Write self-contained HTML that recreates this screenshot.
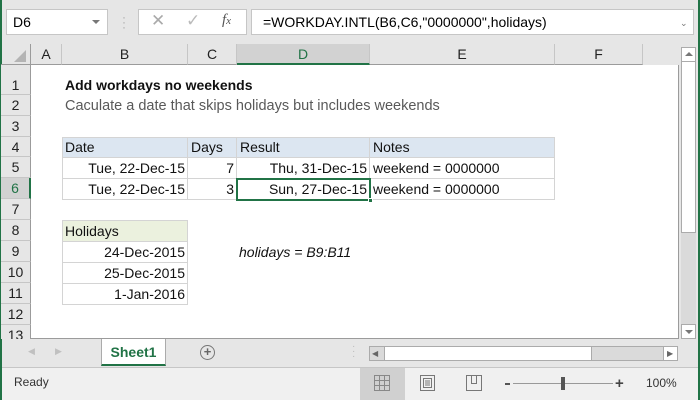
<!DOCTYPE html>
<html><head><meta charset="utf-8"><style>
*{margin:0;padding:0;box-sizing:border-box}
body{width:700px;height:400px;overflow:hidden;background:#e6e6e6;font-family:"Liberation Sans",Arial,sans-serif;position:relative;color:#000}
.a{position:absolute}
.rh{position:absolute;left:1px;width:30px;background:#e6e6e6;border-bottom:1px solid #c6c6c6;border-right:1px solid #9b9b9b;font-size:14px;text-align:center;color:#222}
.ch{position:absolute;top:44px;height:21px;border-right:1px solid #c6c6c6;font-size:14px;text-align:center;line-height:21px;color:#222;border-bottom:1px solid #9b9b9b}
.c{position:absolute;font-size:14px;white-space:nowrap;line-height:20px;padding:0 3px;color:#111}
.r{text-align:right}
</style></head><body>
<div class="a" style="left:0;top:0;width:2px;height:400px;background:#217346"></div>
<div class="a" style="right:0;top:0;width:2px;height:400px;background:#217346"></div>
<!-- formula bar -->
<div class="a" style="left:6px;top:9px;width:102px;height:26px;background:#fff;border:1px solid #c6c6c6;font-size:14px;line-height:24px;padding-left:6px">D6</div>
<div class="a" style="left:92px;top:20px;width:0;height:0;border-left:4px solid transparent;border-right:4px solid transparent;border-top:4px solid #777"></div>
<div class="a" style="left:122px;top:15px;color:#aaa;font-size:12px;line-height:5px">·<br>·<br>·</div>
<div class="a" style="left:138px;top:9px;width:109px;height:26px;background:#fff;border:1px solid #c6c6c6"></div>
<div class="a" style="left:151px;top:11px;font-size:17px;color:#aaa">✕</div>
<div class="a" style="left:186px;top:11px;font-size:17px;color:#bbb">✓</div>
<div class="a" style="left:222px;top:12px;font-size:15px;font-style:italic;font-family:'Liberation Serif',serif;color:#555">f<span style="font-size:11px">x</span></div>
<div class="a" style="left:251px;top:9px;width:443px;height:26px;background:#fff;border:1px solid #c6c6c6;font-size:14px;line-height:24px;padding-left:11px">=WORKDAY.INTL(B6,C6,"0000000",holidays)</div>
<div class="a" style="left:680px;top:18px;font-size:9px;color:#777">&#8964;</div>
<!-- column headers -->
<div class="a" style="left:1px;top:44px;width:30px;height:21px;border-right:1px solid #9b9b9b;border-bottom:1px solid #9b9b9b"></div>
<div class="a" style="left:14px;top:50px;width:0;height:0;border-left:12px solid transparent;border-bottom:12px solid #b4b4b4"></div>
<div class="ch" style="left:31px;width:31px">A</div>
<div class="ch" style="left:62px;width:126px">B</div>
<div class="ch" style="left:188px;width:49px">C</div>
<div class="ch" style="left:237px;width:133px;background:#d2d2d2;color:#217346;border-bottom:2px solid #217346">D</div>
<div class="ch" style="left:370px;width:185px">E</div>
<div class="ch" style="left:555px;width:88px">F</div>
<!-- grid area -->
<div class="a" style="left:31px;top:65px;width:648px;height:274px;background:#fff;border-right:1px solid #9b9b9b;border-bottom:1px solid #9b9b9b"></div>
<!-- row headers -->
<div class="rh" style="top:65px;height:30px;line-height:40px">1</div>
<div class="rh" style="top:95px;height:21px;line-height:21px">2</div>
<div class="rh" style="top:116px;height:21px;line-height:21px">3</div>
<div class="rh" style="top:137px;height:20px;line-height:20px">4</div>
<div class="rh" style="top:157px;height:21px;line-height:21px">5</div>
<div class="rh" style="top:178px;height:21px;line-height:21px;background:#d2d2d2;color:#217346;border-right:2px solid #217346">6</div>
<div class="rh" style="top:199px;height:21px;line-height:21px">7</div>
<div class="rh" style="top:220px;height:21px;line-height:21px">8</div>
<div class="rh" style="top:241px;height:21px;line-height:21px">9</div>
<div class="rh" style="top:262px;height:21px;line-height:21px">10</div>
<div class="rh" style="top:283px;height:21px;line-height:21px">11</div>
<div class="rh" style="top:304px;height:21px;line-height:21px">12</div>
<div class="rh" style="top:325px;height:14px;line-height:21px;overflow:hidden;border-bottom:none">13</div>
<!-- title -->
<div class="c" style="left:62px;top:75px;font-weight:bold">Add workdays no weekends</div>
<div class="c" style="left:62px;top:96px;color:#595959;font-size:14.5px">Caculate a date that skips holidays but includes weekends</div>
<!-- table -->
<div class="a" style="left:62px;top:137px;width:493px;height:20px;background:#dce6f1"></div>
<div class="a" style="left:62px;top:137px;width:493px;height:63px;border:1px solid #d4d4d4"></div>
<div class="a" style="left:62px;top:157px;width:493px;height:1px;background:#d4d4d4"></div>
<div class="a" style="left:62px;top:178px;width:493px;height:1px;background:#d4d4d4"></div>
<div class="a" style="left:187px;top:137px;width:1px;height:63px;background:#d4d4d4"></div>
<div class="a" style="left:236px;top:137px;width:1px;height:63px;background:#d4d4d4"></div>
<div class="a" style="left:369px;top:137px;width:1px;height:63px;background:#d4d4d4"></div>
<div class="c" style="left:62px;top:137px">Date</div>
<div class="c" style="left:188px;top:137px">Days</div>
<div class="c" style="left:237px;top:137px">Result</div>
<div class="c" style="left:370px;top:137px">Notes</div>
<div class="c r" style="left:62px;top:158px;width:126px">Tue, 22-Dec-15</div>
<div class="c r" style="left:188px;top:158px;width:49px">7</div>
<div class="c r" style="left:237px;top:158px;width:133px">Thu, 31-Dec-15</div>
<div class="c" style="left:370px;top:158px">weekend = 0000000</div>
<div class="c r" style="left:62px;top:179px;width:126px">Tue, 22-Dec-15</div>
<div class="c r" style="left:188px;top:179px;width:49px">3</div>
<div class="c r" style="left:237px;top:179px;width:133px">Sun, 27-Dec-15</div>
<div class="c" style="left:370px;top:179px">weekend = 0000000</div>
<div class="a" style="left:236px;top:178px;width:135px;height:23px;border:2px solid #217346"></div>
<div class="a" style="left:368px;top:198px;width:5px;height:5px;background:#217346;border:1px solid #fff"></div>
<!-- holidays -->
<div class="a" style="left:62px;top:220px;width:126px;height:21px;background:#ebf1de"></div>
<div class="a" style="left:62px;top:220px;width:126px;height:85px;border:1px solid #d4d4d4"></div>
<div class="a" style="left:62px;top:241px;width:126px;height:1px;background:#d4d4d4"></div>
<div class="a" style="left:62px;top:262px;width:126px;height:1px;background:#d4d4d4"></div>
<div class="a" style="left:62px;top:283px;width:126px;height:1px;background:#d4d4d4"></div>
<div class="c" style="left:62px;top:221px">Holidays</div>
<div class="c r" style="left:62px;top:242px;width:126px">24-Dec-2015</div>
<div class="c r" style="left:62px;top:263px;width:126px">25-Dec-2015</div>
<div class="c r" style="left:62px;top:284px;width:126px">1-Jan-2016</div>
<div class="c" style="left:236px;top:242px;font-style:italic">holidays = B9:B11</div>
<!-- vertical scrollbar -->
<div class="a" style="left:681px;top:47px;width:15px;height:292px;background:#dadada"></div>
<div class="a" style="left:681px;top:47px;width:15px;height:15px;background:#fff;border:1px solid #ababab"></div>
<div class="a" style="left:685px;top:52px;border-left:4px solid transparent;border-right:4px solid transparent;border-bottom:4px solid #777;width:0;height:0"></div>
<div class="a" style="left:681px;top:61px;width:15px;height:172px;background:#fff;border:1px solid #ababab"></div>
<div class="a" style="left:681px;top:324px;width:15px;height:15px;background:#fff;border:1px solid #ababab"></div>
<div class="a" style="left:685px;top:330px;border-left:4px solid transparent;border-right:4px solid transparent;border-top:4px solid #777;width:0;height:0"></div>
<!-- tab bar -->
<div class="a" style="left:2px;top:339px;width:696px;height:28px;background:#e6e6e6"></div>
<div class="a" style="left:28px;top:346px;color:#c0c0c0;font-size:9px">◀</div>
<div class="a" style="left:55px;top:346px;color:#c0c0c0;font-size:9px">▶</div>
<div class="a" style="left:101px;top:339px;width:65px;height:27px;background:#fff;border-left:1px solid #ababab;border-right:1px solid #ababab;border-bottom:2px solid #217346;text-align:center;font-weight:bold;color:#217346;font-size:14px;line-height:26px">Sheet1</div>
<div class="a" style="left:200px;top:345px;width:15px;height:15px;border:1px solid #777;border-radius:50%;text-align:center;font-size:13px;line-height:12px;color:#666;font-weight:bold">+</div>
<div class="a" style="left:352px;top:344px;color:#bbb;font-size:10px;line-height:5px">·<br>·<br>·</div>
<div class="a" style="left:369px;top:346px;width:309px;height:15px;background:#dadada;border:1px solid #ababab"></div>
<div class="a" style="left:384px;top:346px;width:208px;height:15px;background:#fff;border:1px solid #ababab"></div>
<div class="a" style="left:372px;top:349px;color:#666;font-size:8px">◀</div>
<div class="a" style="left:663px;top:346px;width:15px;height:15px;background:#fff;border:1px solid #ababab"></div>
<div class="a" style="left:667px;top:349px;color:#666;font-size:8px">▶</div>
<!-- status bar -->
<div class="a" style="left:2px;top:367px;width:696px;height:33px;background:#f0f0f0;border-top:1px solid #c6c6c6"></div>
<div class="a" style="left:14px;top:375px;font-size:12px;color:#333">Ready</div>
<div class="a" style="left:360px;top:368px;width:45px;height:32px;background:#d0d0d0"></div>
<svg class="a" style="left:374px;top:375px" width="17" height="17"><g fill="none" stroke="#888"><rect x="0.5" y="0.5" width="15" height="15"/><path d="M5.5 0v16M10.5 0v16M0 5.5h16M0 10.5h16"/></g></svg>
<svg class="a" style="left:420px;top:375px" width="16" height="17"><g fill="none" stroke="#777"><rect x="0.5" y="0.5" width="14" height="15"/><rect x="3.5" y="3.5" width="8" height="9"/><path d="M5 6h5M5 8h5M5 10h5"/></g></svg>
<svg class="a" style="left:466px;top:375px" width="17" height="17"><g fill="none" stroke="#777"><path d="M0.5 0.5h15v15h-15zM5.5 0.5v8h5v-8"/></g></svg>
<div class="a" style="left:505px;top:383px;width:5px;height:2px;background:#555"></div>
<div class="a" style="left:513px;top:383px;width:100px;height:1px;background:#999"></div>
<div class="a" style="left:561px;top:377px;width:4px;height:13px;background:#555"></div>
<div class="a" style="left:615px;top:375px;font-size:15px;color:#444;font-weight:bold">+</div>
<div class="a" style="left:646px;top:376px;font-size:12px;color:#333">100%</div>
</body></html>
